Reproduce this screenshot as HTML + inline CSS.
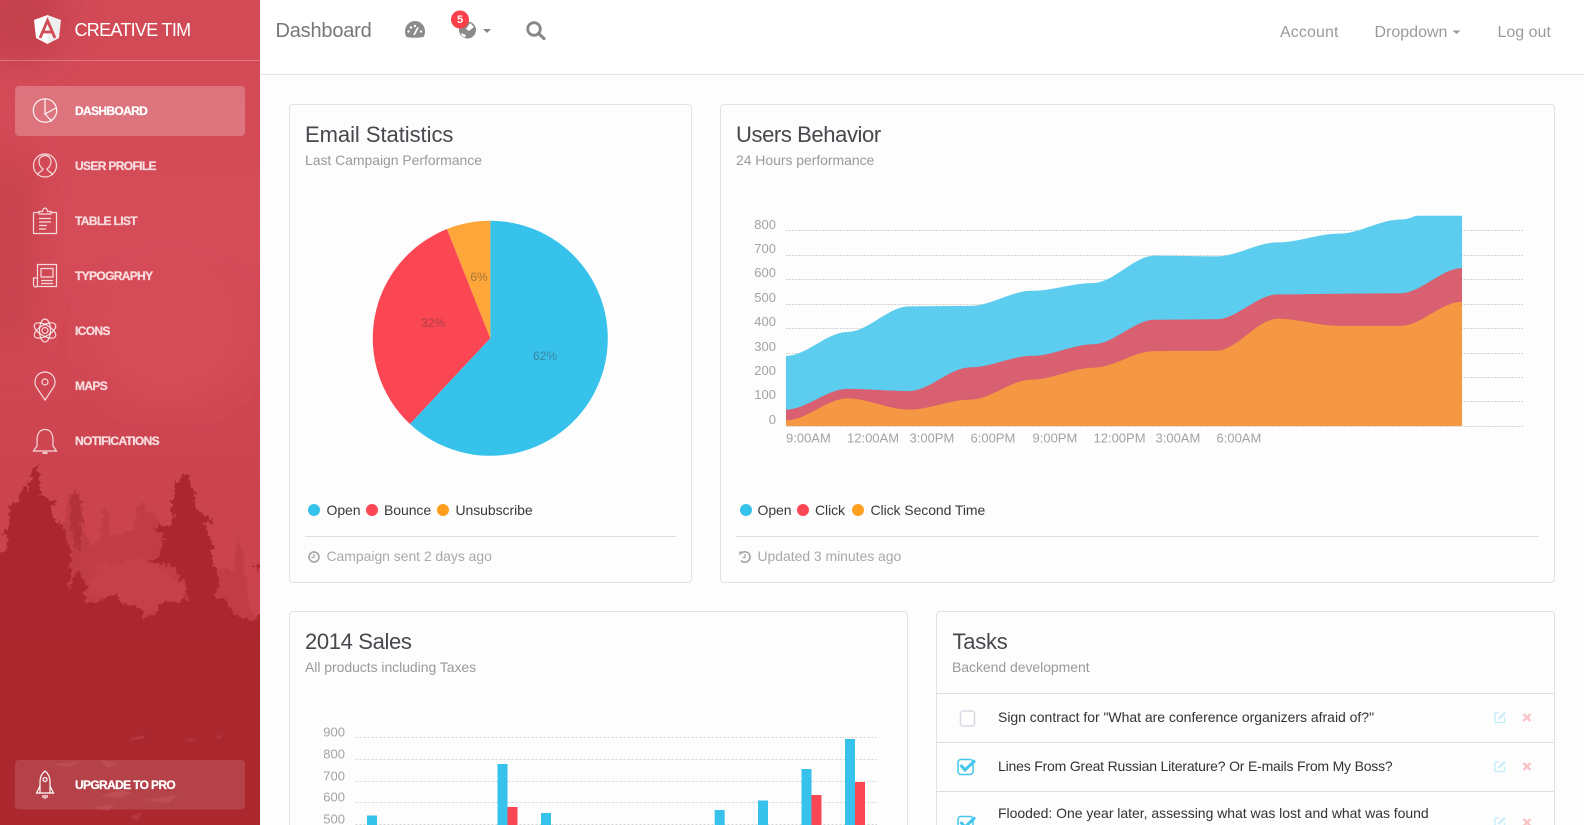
<!DOCTYPE html>
<html><head><meta charset="utf-8"><title>Dashboard</title>
<style>
html,body{margin:0;padding:0;width:1584px;height:825px;overflow:hidden;background:#fdfdfd;font-family:"Liberation Sans",sans-serif}
#w{position:absolute;left:0;top:0;width:1584px;height:825px;overflow:hidden}
.t{position:absolute;white-space:nowrap;line-height:20px;height:20px}
.card{position:absolute;background:#fefefe;border:1px solid #e2e2e2;border-radius:4px;box-sizing:border-box}
.h{font-size:22px;color:#47474d;letter-spacing:-.25px;line-height:26px;height:26px}
.s{font-size:14px;color:#9a9a9a;letter-spacing:-.05px}
.l{font-size:14px;color:#3a3a3a;letter-spacing:-.07px}
.f{font-size:14px;color:#a9a9a9;letter-spacing:-.05px}
.m{font-size:12px;font-weight:bold;color:#f8dcde;letter-spacing:-.65px;left:75px;-webkit-text-stroke:.25px currentColor}
.tk{font-size:14px;color:#333;left:998px}
.n{font-size:16px;color:#9a9a9a}
.dot{position:absolute;width:12px;height:12px;border-radius:50%}
.ln{position:absolute;background:#dedede;height:1px}
svg{display:block}
</style></head><body><div id="w">

<svg width="1584" height="825" style="position:absolute;left:0;top:0" xmlns="http://www.w3.org/2000/svg">
<defs>
<linearGradient id="sb" x1="0" y1="0" x2="0" y2="1"><stop offset="0" stop-color="#d24a56"/><stop offset=".3" stop-color="#d54c58"/><stop offset=".6" stop-color="#cb434e"/><stop offset=".8" stop-color="#cb434e"/></linearGradient>
<filter id="b" x="-50%" y="-50%" width="200%" height="200%"><feGaussianBlur stdDeviation="18"/></filter>
<filter id="j" filterUnits="userSpaceOnUse" x="-20" y="440" width="300" height="230"><feTurbulence type="fractalNoise" baseFrequency=".22" numOctaves="2" seed="4"/><feDisplacementMap in="SourceGraphic" scale="10" xChannelSelector="R" yChannelSelector="G"/></filter>
<clipPath id="sc"><rect width="260" height="825"/></clipPath>
<clipPath id="ch"><rect x="786" y="215.700" width="700" height="212"/></clipPath>
</defs>

<!-- sidebar -->
<g clip-path="url(#sc)">
<rect width="260" height="825" fill="url(#sb)"/>
<ellipse cx="20" cy="20" rx="45" ry="40" fill="#c23f4b" filter="url(#b)"/>
<ellipse cx="170" cy="340" rx="75" ry="65" fill="#d8505c" fill-opacity=".6" filter="url(#b)"/>
<ellipse cx="10" cy="250" rx="30" ry="110" fill="#c9424e" filter="url(#b)"/>
<g filter="url(#j)"><g transform="translate(0,460) scale(.33333)">
<path fill="#c03d47" d="M190,200 L205,110 L225,80 L245,130 L250,200 L270,260 L300,240 L310,150 L325,150 L330,230 L370,220 L400,210 L410,150 L425,125 L445,160 L460,150 L480,190 L520,220 L560,380 L640,400 L660,330 L700,330 L715,220 L730,300 L745,430 L770,480 L780,560 L0,560 Z"/>
<path fill="#c6414b" d="M260,400 L300,300 L340,320 L420,290 L500,340 L555,380 L540,420 L480,460 L430,450 L360,420 L300,410 Z"/>
<path fill="#b2313a" d="M213,110 L228,88 L243,130 L245,200 L240,280 L225,250 L212,190 Z"/>
<path fill="#ab282f" d="M-30,290 L12,280 L25,240 L10,215 L35,190 L25,155 L35,125 L60,120 L70,80 L85,95 L95,40 L110,10 L118,60 L122,110 L150,125 L175,120 L150,150 L160,180 L175,195 L180,175 L190,210 L210,270 L215,320 L205,395 L225,350 L235,325 L250,370 L265,375 L250,400 L260,430 L300,420 L355,405 L360,430 L420,440 L425,475 L470,460 L480,430 L560,420 L560,375 L535,350 L520,320 L490,310 L450,310 L480,290 L490,230 L470,215 L460,200 L510,195 L525,165 L510,155 L525,100 L520,70 L545,60 L550,35 L560,45 L580,85 L590,150 L625,170 L640,185 L610,190 L640,260 L630,290 L650,330 L660,375 L640,410 L680,420 L700,460 L740,475 L760,485 L800,440 L800,560 L-30,560 Z"/>
<path fill="#ab282f" d="M758,310 L780,320 L775,335 Z"/>
</g></g>
<rect y="639" width="260" height="186" fill="#ab282f"/>
<g fill="#b5363f">
<path d="M130,738 L145,735 L143,739 L131,740 Z"/><path d="M216,738 L223,733 L220,739 Z"/><path d="M186,738 L196,740 L190,742 Z"/>
<path d="M52,764 L80,762 L68,767 Z"/><path d="M100,760 L118,763 L108,768 Z"/><path d="M100,796 L120,790 L132,793 L120,798 Z"/><path d="M145,800 L178,795 L168,803 Z"/><path d="M90,808 L115,804 L108,811 Z"/><path d="M130,817 L142,812 L138,821 Z"/>
</g>
<rect x="0" y="60" width="260" height="1" fill="#fff" fill-opacity=".25"/>
<rect x="15" y="86" width="230" height="50" rx="4" fill="#fff" fill-opacity=".23"/>
<rect x="15" y="760" width="230" height="49.500" rx="4" fill="#fff" fill-opacity=".12"/>

<!-- logo -->
<path d="M47.500,15 L34,20 L36,38 L47.500,44 L47.500,15Z" fill="#fff"/>
<path d="M47.500,15 L61,20 L59,38 L47.500,44Z" fill="#eee"/>
<path d="M40,38 L47.500,20.500 L55,38 M42.500,32 H52.500" fill="none" stroke="#d14a55" stroke-width="2.800"/>

<!-- menu icons -->
<g fill="none" stroke="#fff" stroke-width="1.200">
<g stroke-opacity=".95"><circle cx="45" cy="110.500" r="11.700"/><path d="M45,99 V114 L56,108 M45,114 L52,121.500"/></g>
<g stroke-opacity=".8">
<circle cx="45" cy="165.500" r="11.500"/><path d="M37.500,175 c.5-3 5-3.500 5.500-6 c-2-1.500-4-4-4-7.500 c0-4 3-6 6-6 s6,2 6,6 c0,3.500-2,6-4,7.500 c.5,2.500 5,3 5.500,6"/>
<path d="M33.500,212.500 H39 M51,212.500 H56.500 V233.500 H33.500 V212.500 M39,214 V211.500 H42.500 C43,207 47,207 47.500,211.500 H51 V214 Z M39,218.500 H51 M39,222 H51 M39,225.500 H47 M39,229 H46"/>
<path d="M37.500,278 V264.500 H56.500 V286.500 H37 M41,268.500 H53 V277 H41 Z M41,280.500 H53 M41,283.500 H53 M37.500,278 H33.500 V284 C33.500,288 37.500,288 37.500,284 Z"/>
<g><ellipse cx="45" cy="330.500" rx="5.500" ry="11.500"/><ellipse cx="45" cy="330.500" rx="5.500" ry="12" transform="rotate(60 45 330.500)"/><ellipse cx="45" cy="330.500" rx="5.500" ry="12" transform="rotate(120 45 330.500)"/><circle cx="45" cy="330.500" r="3"/></g>
<path d="M45,400 L37,388 A10,10 0 1 1 53,388 Z"/><circle cx="45" cy="382" r="3"/>
<path d="M45,429.500 C38.500,429.500 37,435.500 37,440.500 V446 L33.500,451 H56.500 L53,446 V440.500 C53,435.500 51.500,429.500 45,429.500 Z"/><path d="M42.500,453 H47.500" stroke-width="1.800"/>
</g>
<g stroke-opacity="1"><path d="M45,771 C41,774 40,778 40,782 V793 H50 V782 C50,778 49,774 45,771 Z"/><circle cx="45" cy="779.500" r="2"/><path d="M40,786 L36.500,793 H40 M50,786 L53.500,793 H50 M43,795 V798 M45,795 V799 M47,795 V798"/></g>
</g>
</g>

<!-- navbar -->
<rect x="260" y="0" width="1324" height="74" fill="#fff"/>
<rect x="260" y="74" width="1324" height="1" fill="#e3e3e3"/>
<path d="M406.500,37 A10,10.500 0 1 1 423.500,37 Q415,38.500 406.500,37 Z" fill="#8b8b8b"/>
<g fill="#fff"><circle cx="408.500" cy="31.500" r="1.200"/><circle cx="411" cy="27.500" r="1.200"/><circle cx="415" cy="26" r="1.200"/><circle cx="421" cy="31.500" r="1.200"/></g>
<path d="M414,35 L418,27.500" stroke="#fff" stroke-width="1.700"/>
<circle cx="467.500" cy="30" r="8.500" fill="#8a8a8a"/>
<path d="M470,23 L474,27 L469,31 L466,29 Z M461,33 L466,35 L465,37.500 L462,36 Z" fill="#fff"/>
<circle cx="460" cy="19.500" r="9" fill="#fa404b"/>
<path d="M483,29 H491 L487,33 Z" fill="#888"/>
<circle cx="534" cy="29" r="6.300" fill="none" stroke="#888" stroke-width="2.800"/><path d="M538.500,33.500 L544,38.500" stroke="#888" stroke-width="3.200" stroke-linecap="round"/>
<path d="M1452.500,30.500 H1460.500 L1456.500,34 Z" fill="#999"/>

<!-- pie -->
<path d="M490.300,338.300 L490.300,220.800 A117.500,117.500 0 1 1 409.900,424 Z" fill="#36c2ea"/>
<path d="M490.300,338.300 L409.900,424 A117.500,117.500 0 0 1 447,229.050 Z" fill="#fa4753"/>
<path d="M490.300,338.300 L447,229.050 A117.500,117.500 0 0 1 490.300,220.800 Z" fill="#ffa63a"/>
<g font-family="Liberation Sans" font-size="12" text-anchor="middle">
<text x="545" y="360" fill="#3b83a2">62%</text><text x="433" y="327" fill="#ad3f48">32%</text><text x="479" y="281" fill="#a7763a">6%</text>
</g>

<!-- area chart -->
<g stroke="#d4d4d4" stroke-dasharray="2 1">
<path d="M786,230.500 H1524 M786,255.500 H1524 M786,279.500 H1524 M786,304.500 H1524 M786,328.500 H1524 M786,353.500 H1524 M786,377.500 H1524 M786,401.500 H1524 M786,426.500 H1524"/>
</g>
<g clip-path="url(#ch)">
<path fill="#5ccdee" d="M786,426 L786,355.900 C806.500,355.900 827,332 847.500,332 C867.900,332 888.400,306.400 908.900,306.400 C929.400,306.400 949.900,305.900 970.400,305.900 C990.800,305.900 1011.300,290.800 1031.800,290.800 C1052.300,290.800 1072.800,283 1093.300,283 C1113.700,283 1134.200,255.600 1154.700,255.600 C1175.200,255.600 1195.700,256.400 1216.200,256.400 C1236.600,256.400 1257.100,242.400 1277.600,242.400 C1298.100,242.400 1318.600,233.600 1339.100,233.600 C1359.500,233.600 1380,219.500 1400.500,219.500 C1421,219.500 1441.500,195.600 1462,195.600 L1462,426 Z"/>
<path fill="#d86070" d="M786,426 L786,409.600 C806.500,409.600 827,388.900 847.500,388.900 C867.900,388.900 888.400,391.100 908.900,391.100 C929.400,391.100 949.900,367.400 970.400,367.400 C990.800,367.400 1011.300,355.900 1031.800,355.900 C1052.300,355.900 1072.800,344.200 1093.300,344.200 C1113.700,344.200 1134.200,319.800 1154.700,319.800 C1175.200,319.800 1195.700,319.300 1216.200,319.300 C1236.600,319.300 1257.100,294.400 1277.600,294.400 C1298.100,294.400 1318.600,293.700 1339.100,293.700 C1359.500,293.700 1380,293.200 1400.500,293.200 C1421,293.200 1441.500,268.100 1462,268.100 L1462,426 Z"/>
<path fill="#f49843" d="M786,426 L786,420.400 C806.500,420.400 827,398.400 847.500,398.400 C867.900,398.400 888.400,409.600 908.900,409.600 C929.400,409.600 949.900,399.600 970.400,399.600 C990.800,399.600 1011.300,379.600 1031.800,379.600 C1052.300,379.600 1072.800,367.700 1093.300,367.700 C1113.700,367.700 1134.200,351.100 1154.700,351.100 C1175.200,351.100 1195.700,350.800 1216.200,350.800 C1236.600,350.800 1257.100,318.800 1277.600,318.800 C1298.100,318.800 1318.600,325.900 1339.100,325.900 C1359.500,325.900 1380,325.900 1400.500,325.900 C1421,325.900 1441.500,301.800 1462,301.800 L1462,426 Z"/>
</g>
<g font-family="Liberation Sans" font-size="13" fill="#a3a3a3" text-anchor="end">
<text x="776" y="229">800</text><text x="776" y="253">700</text><text x="776" y="277">600</text><text x="776" y="302">500</text><text x="776" y="326">400</text><text x="776" y="351">300</text><text x="776" y="375">200</text><text x="776" y="399">100</text><text x="776" y="424">0</text>
</g>
<g font-family="Liberation Sans" font-size="13" fill="#a3a3a3">
<text x="786" y="442.500">9:00AM</text><text x="847" y="442.500">12:00AM</text><text x="909.500" y="442.500">3:00PM</text><text x="970.500" y="442.500">6:00PM</text><text x="1032.500" y="442.500">9:00PM</text><text x="1093.500" y="442.500">12:00PM</text><text x="1155.500" y="442.500">3:00AM</text><text x="1216.500" y="442.500">6:00AM</text>
</g>
</svg>

<!-- cards -->
<div class="card" style="left:289px;top:104px;width:403px;height:479px;background:transparent"></div>
<div class="card" style="left:720px;top:104px;width:835px;height:479px;background:transparent"></div>
<div class="card" style="left:289px;top:611px;width:619px;height:240px;background:transparent"></div>
<div class="card" style="left:936px;top:611px;width:619px;height:240px;background:transparent"></div>

<!-- sidebar text -->
<div class="t" style="left:74.500px;top:20px;font-size:18px;color:#fff;letter-spacing:-.7px">CREATIVE TIM</div>
<div class="t m" style="top:101px;color:#fff">DASHBOARD</div>
<div class="t m" style="top:156px">USER PROFILE</div>
<div class="t m" style="top:211px">TABLE LIST</div>
<div class="t m" style="top:266px">TYPOGRAPHY</div>
<div class="t m" style="top:321px">ICONS</div>
<div class="t m" style="top:376px">MAPS</div>
<div class="t m" style="top:431px">NOTIFICATIONS</div>
<div class="t m" style="top:775px;color:#fff">UPGRADE TO PRO</div>

<!-- nav text -->
<div class="t" style="left:275.500px;top:21px;font-size:20px;color:#777;letter-spacing:-.2px">Dashboard</div>
<div class="t" style="left:451px;top:9.500px;width:18px;text-align:center;font-size:11px;font-weight:bold;color:#fff">5</div>
<div class="t n" style="left:1280px;top:23px;letter-spacing:.1px">Account</div>
<div class="t n" style="left:1374.500px;top:23px">Dropdown</div>
<div class="t n" style="left:1497.500px;top:23px">Log out</div>

<!-- card 1 -->
<div class="t h" style="left:305px;top:122px;letter-spacing:-.05px">Email Statistics</div>
<div class="t s" style="left:305px;top:150px">Last Campaign Performance</div>
<div class="dot" style="left:308px;top:504px;background:#36c2ea"></div>
<div class="t l" style="left:326.500px;top:500px">Open</div>
<div class="dot" style="left:365.500px;top:504px;background:#fa4753"></div>
<div class="t l" style="left:384px;top:500px">Bounce</div>
<div class="dot" style="left:437px;top:504px;background:#ff9f1e"></div>
<div class="t l" style="left:455.500px;top:500px">Unsubscribe</div>
<div class="ln" style="left:305px;top:536px;width:371px"></div>
<svg width="14" height="14" style="position:absolute;left:307px;top:549.500px"><circle cx="7" cy="7" r="5" fill="none" stroke="#a9a9a9" stroke-width="1.700"/><path d="M7,4 V7.500 H4.500" fill="none" stroke="#a9a9a9" stroke-width="1.300"/></svg>
<div class="t f" style="left:326.500px;top:546px">Campaign sent 2 days ago</div>

<!-- card 2 -->
<div class="t h" style="left:736px;top:122px;letter-spacing:-.4px">Users Behavior</div>
<div class="t s" style="left:736px;top:150px">24 Hours performance</div>
<div class="dot" style="left:739.500px;top:504px;background:#36c2ea"></div>
<div class="t l" style="left:757.500px;top:500px">Open</div>
<div class="dot" style="left:796.500px;top:504px;background:#fa4753"></div>
<div class="t l" style="left:815px;top:500px">Click</div>
<div class="dot" style="left:852px;top:504px;background:#ff9f1e"></div>
<div class="t l" style="left:870.500px;top:500px">Click Second Time</div>
<div class="ln" style="left:736px;top:536px;width:803px"></div>
<svg width="14" height="14" style="position:absolute;left:738px;top:549.500px"><path d="M3,3.500 A5.200,5.200 0 1 1 3,10.500" fill="none" stroke="#a9a9a9" stroke-width="1.700"/><path d="M.8,1.500 L5,1.500 L1.500,5.500 Z" fill="#a9a9a9"/><path d="M7,4 V7.500 H4.500" fill="none" stroke="#a9a9a9" stroke-width="1.300"/></svg>
<div class="t f" style="left:757.500px;top:546px">Updated 3 minutes ago</div>

<!-- card 3 -->
<div class="t h" style="left:305px;top:629px;letter-spacing:-.35px">2014 Sales</div>
<div class="t s" style="left:305px;top:656.500px">All products including Taxes</div>
<svg width="1584" height="825" style="position:absolute;left:0;top:0;pointer-events:none">
<path d="M355.500,737.500 H877 M355.500,759.500 H877 M355.500,781.500 H877 M355.500,802.500 H877 M355.500,824.500 H877" stroke="#d4d4d4" stroke-dasharray="2 2"/>
<g fill="#36c2ea">
<rect x="367" y="815.500" width="10" height="10"/><rect x="497.500" y="764" width="10" height="61"/><rect x="541" y="813" width="10" height="12"/><rect x="714.700" y="810" width="10" height="15"/><rect x="758" y="800.500" width="10" height="25"/><rect x="801.500" y="769" width="10" height="56"/><rect x="845" y="739" width="10" height="86"/>
</g>
<g fill="#fa4753">
<rect x="507.500" y="807" width="10" height="18"/><rect x="811.500" y="795" width="10" height="30"/><rect x="855" y="782" width="10" height="43"/>
</g>
<g font-family="Liberation Sans" font-size="13" fill="#a3a3a3" text-anchor="end">
<text x="345" y="736.500">900</text><text x="345" y="758.500">800</text><text x="345" y="780.500">700</text><text x="345" y="801.500">600</text><text x="345" y="823.500">500</text>
</g>
</svg>

<!-- card 4 -->
<div class="t h" style="left:952.500px;top:629px">Tasks</div>
<div class="t s" style="left:952px;top:656.500px">Backend development</div>
<div class="ln" style="left:936px;top:693px;width:619px"></div>
<div class="ln" style="left:936px;top:742px;width:619px"></div>
<div class="ln" style="left:936px;top:791px;width:619px"></div>
<div class="t tk" style="top:707px;letter-spacing:-.02px">Sign contract for "What are conference organizers afraid of?"</div>
<div class="t tk" style="top:756px;letter-spacing:-.19px">Lines From Great Russian Literature? Or E-mails From My Boss?</div>
<div class="t tk" style="top:803px;letter-spacing:-.03px">Flooded: One year later, assessing what was lost and what was found</div>
<svg width="1584" height="825" style="position:absolute;left:0;top:0;pointer-events:none">
<rect x="960.500" y="711" width="14" height="15" rx="2.500" fill="#fff" stroke="#d6dbe3" stroke-width="1.500"/>
<g fill="none" stroke="#45c6ec">
<rect x="958" y="759.500" width="15" height="15" rx="3" stroke-width="1.500"/>
<path d="M960.500,765 L965,770 L975,760.500" stroke-width="3"/>
<rect x="958" y="816.500" width="15" height="15" rx="3" stroke-width="1.500"/>
<path d="M960.500,822 L965,827 L975,817.500" stroke-width="3"/>
</g>
<g fill="none" stroke="#c4edf8" stroke-width="1.300">
<path d="M1499,713 H1495 V722.500 H1504.500 V717.500"/><path d="M1498.500,719 L1505,712.500" stroke-width="2"/>
<path d="M1499,762 H1495 V771.500 H1504.500 V766.500"/><path d="M1498.500,768 L1505,761.500" stroke-width="2"/>
<path d="M1499,818 H1495 V827.500 H1504.500 V822.500"/><path d="M1498.500,824 L1505,817.500" stroke-width="2"/>
</g>
<g stroke="#f8c3c7" stroke-width="2.300">
<path d="M1523.500,714 L1530.500,721 M1530.500,714 L1523.500,721"/>
<path d="M1523.500,763 L1530.500,770 M1530.500,763 L1523.500,770"/>
<path d="M1523.500,819 L1530.500,826 M1530.500,819 L1523.500,826"/>
</g>
</svg>
</div></body></html>
